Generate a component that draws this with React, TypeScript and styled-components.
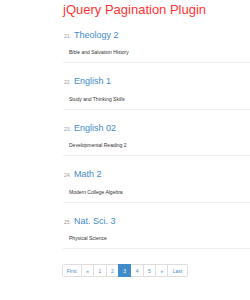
import styled, { createGlobalStyle } from "styled-components";

const GlobalStyle = createGlobalStyle`
  html, body {
    margin: 0;
    padding: 0;
    background: #fff;
  }
  body {
    font-family: "Liberation Sans", Arial, sans-serif;
    color: #333;
  }
`;

const Page = styled.div`
  width: 250px;
  height: 300px;
  overflow: hidden;
`;

const Content = styled.div`
  margin-left: 63px;
`;

const Title = styled.h1`
  margin: 2.5px 0 0;
  font-size: 13px;
  line-height: 14px;
  font-weight: 400;
  color: #f33;
`;

const List = styled.ul`
  list-style: none;
  margin: 0;
  padding: 0;
`;

const Item = styled.li`
  padding: 13px 0 6px;
  border-bottom: 1px solid #eee;
`;

const Head = styled.div`
  display: flex;
  align-items: baseline;
  margin-bottom: 9.5px;
`;

const Num = styled.span`
  margin-left: 1px;
  margin-right: 3px;
  font-size: 5px;
  color: #999;
`;

const Name = styled.h3`
  margin: 0;
  font-size: 9px;
  line-height: 10px;
  font-weight: 400;
  color: #428bca;
`;

const Desc = styled.p`
  margin: 0;
  padding-left: 6px;
  font-size: 5px;
  line-height: 7px;
  color: #333;
`;

const Pager = styled.ul`
  list-style: none;
  display: flex;
  justify-content: center;
  margin: 15px 0 0;
  padding: 0;
`;

const PageBtn = styled.li<{ $active?: boolean; $first?: boolean; $last?: boolean }>`
  height: 13px;
  box-sizing: border-box;
  padding: 0 4.3px;
  margin-left: -1px;
  display: flex;
  align-items: center;
  font-size: 5px;
  border: 1px solid ${(p) => (p.$active ? "#428bca" : "#ddd")};
  background: ${(p) => (p.$active ? "#428bca" : "#fff")};
  color: ${(p) => (p.$active ? "#fff" : "#428bca")};
  border-radius: ${(p) => (p.$first ? "1.5px 0 0 1.5px" : p.$last ? "0 1.5px 1.5px 0" : "0")};
  position: ${(p) => (p.$active ? "relative" : "static")};
`;

const courses = [
  { no: 21, name: "Theology 2", desc: "Bible and Salvation History" },
  { no: 22, name: "English 1", desc: "Study and Thinking Skills" },
  { no: 23, name: "English 02", desc: "Developmental Reading 2" },
  { no: 24, name: "Math 2", desc: "Modern College Algebra" },
  { no: 25, name: "Nat. Sci. 3", desc: "Physical Science" },
];

const pages = ["First", "«", "1", "2", "3", "4", "5", "»", "Last"];

export default function App() {
  return (
    <Page>
      <GlobalStyle />
      <Content>
        <Title>jQuery Pagination Plugin</Title>
        <List>
          {courses.map((c) => (
            <Item key={c.no}>
              <Head>
                <Num>{c.no}.</Num>
                <Name>{c.name}</Name>
              </Head>
              <Desc>{c.desc}</Desc>
            </Item>
          ))}
        </List>
      </Content>
      <Pager>
        {pages.map((p, i) => (
          <PageBtn
            key={p}
            $active={p === "3"}
            $first={i === 0}
            $last={i === pages.length - 1}
          >
            {p}
          </PageBtn>
        ))}
      </Pager>
    </Page>
  );
}
